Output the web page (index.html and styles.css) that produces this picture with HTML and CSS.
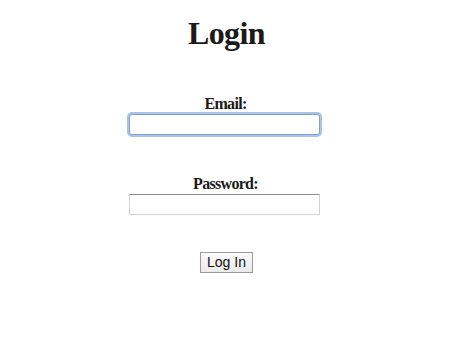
FILE: index.html
```
<!DOCTYPE html>
<html>
<head>
<meta charset="utf-8">
<link rel="stylesheet" href="styles.css">
</head>
<body>
<main class="page">
  <h1 class="title">Login</h1>
  <form class="form">
    <div class="field">
      <label class="label" for="email">Email:</label>
      <input class="input input-focus" id="email" type="text">
    </div>
    <div class="field">
      <label class="label" for="password">Password:</label>
      <input class="input" id="password" type="password">
    </div>
    <div class="actions">
      <button class="button" type="button">Log In</button>
    </div>
  </form>
</main>
</body>
</html>
```
FILE: styles.css
```
html, body {
  margin: 0;
  padding: 0;
  background: #ffffff;
}
.page {
  display: flex;
  flex-direction: column;
  align-items: center;
  padding-top: 15px;
  padding-right: 25px;
  font-family: "Liberation Serif", "Times New Roman", serif;
  color: #1a1a1a;
}
.title {
  margin: 0;
  font-size: 32px;
  font-weight: bold;
  line-height: 37px;
  letter-spacing: -0.6px;
  padding-left: 4px;
}
.form {
  display: flex;
  flex-direction: column;
  align-items: center;
  margin-top: 43px;
}
.field {
  display: flex;
  flex-direction: column;
  align-items: center;
  margin-bottom: 40px;
}
.label {
  font-size: 16px;
  font-weight: bold;
  line-height: 18px;
  height: 19px;
  letter-spacing: -0.7px;
  padding-left: 2px;
}
.input {
  box-sizing: border-box;
  width: 191px;
  height: 21px;
  margin: 0;
  padding: 1px 3px;
  border: 1px solid #d4d4d4;
  border-top: 1px solid #8c8c8c;
  border-radius: 0;
  background: #fff;
  outline: none;
  font-size: 13px;
}
.input-focus {
  border: 1px solid #7da2cf;
  border-radius: 3px;
  box-shadow: 0 0 0 2px #a9c4e6;
}
.actions {
  margin-top: -3px;
  padding-left: 4px;
}
.button {
  box-sizing: border-box;
  height: 21px;
  width: 53px;
  margin: 0;
  padding: 0 4px;
  border: 1px solid #9a9a9a;
  border-radius: 0;
  background: linear-gradient(#fafafa, #ebebeb);
  font-family: "Liberation Sans", Arial, sans-serif;
  font-size: 14px;
  color: #111;
  line-height: 19px;
}
```
